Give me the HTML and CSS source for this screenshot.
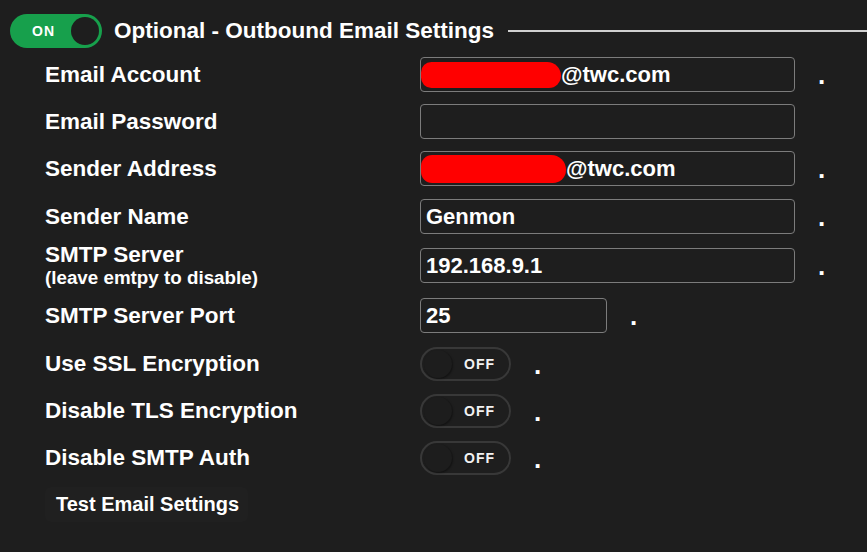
FILE: index.html
```html
<!DOCTYPE html>
<html lang="en">

<head>
    <meta charset="UTF-8">
    <title>Outbound Email Settings</title>
    <link rel="stylesheet" href="styles.css">
</head>

<body>
    <div class="section-head">
        <div class="switch on"><span class="switch-text">ON</span><span class="knob"></span></div>
        <h2>Optional - Outbound Email Settings</h2>
        <div class="rule"></div>
    </div>

    <div class="settings">
        <div class="row">
            <label>Email Account</label>
            <div class="field wide"><span class="redact"></span>@twc.com</div>
            <span class="dot">.</span>
        </div>
        <div class="row">
            <label>Email Password</label>
            <div class="field wide"></div>
        </div>
        <div class="row gap13">
            <label>Sender Address</label>
            <div class="field wide"><span class="redact r2"></span>@twc.com</div>
            <span class="dot">.</span>
        </div>
        <div class="row gap14">
            <label>Sender Name</label>
            <div class="field wide">Genmon</div>
            <span class="dot">.</span>
        </div>
        <div class="row gap15">
            <label>SMTP Server<small>(leave emtpy to disable)</small></label>
            <div class="field wide">192.168.9.1</div>
            <span class="dot">.</span>
        </div>
        <div class="row gap14">
            <label>SMTP Server Port</label>
            <div class="field short">25</div>
            <span class="dot">.</span>
        </div>
        <div class="row toggle-row">
            <label>Use SSL Encryption</label>
            <div class="switch off"><span class="knob"></span><span class="switch-text">OFF</span></div>
            <span class="dot">.</span>
        </div>
        <div class="row toggle-row">
            <label>Disable TLS Encryption</label>
            <div class="switch off"><span class="knob"></span><span class="switch-text">OFF</span></div>
            <span class="dot">.</span>
        </div>
        <div class="row toggle-row">
            <label>Disable SMTP Auth</label>
            <div class="switch off"><span class="knob"></span><span class="switch-text">OFF</span></div>
            <span class="dot">.</span>
        </div>
    </div>

    <button class="test-btn">Test Email Settings</button>
</body>

</html>
```

FILE: styles.css
```css
body {
    margin: 0;
    background-color: #1e1e1e;
    color: #fff;
    font-family: 'Liberation Sans', Arial, sans-serif;
    font-weight: bold;
}

.section-head {
    display: flex;
    align-items: center;
    padding: 14px 0 0 10px;
    height: 34px;
}

.section-head h2 {
    margin: 0 14px 0 12px;
    font-size: 22.5px;
    white-space: nowrap;
}

.rule {
    flex: 1;
    height: 2px;
    background-color: #d0d0d0;
}

.switch {
    box-sizing: border-box;
    display: flex;
    align-items: center;
    width: 92px;
    height: 34px;
    border-radius: 17px;
    flex-shrink: 0;
}

.switch-text {
    font-size: 14px;
    letter-spacing: 1px;
}

.switch.on {
    background-color: #17a04c;
    padding: 0 3px 0 22px;
    justify-content: space-between;
}

.switch.on .knob {
    width: 28px;
    height: 28px;
    border-radius: 50%;
    background-color: #1e1e1e;
}

.switch.off {
    border: 2px solid #383838;
    width: 91px;
    padding: 0 0 0 2px;
    background-color: #1e1e1e;
}

.switch.off .knob {
    width: 28px;
    height: 28px;
    border-radius: 50%;
    background-color: #1d1d1d;
    box-shadow: 1px 1px 2px rgba(0, 0, 0, 0.4);
    margin-right: 10px;
}

.switch.off .switch-text {
    margin-left: 2px;
    color: #f2f2f2;
}

.settings {
    padding: 9px 0 0 45px;
}

.row {
    display: flex;
    align-items: center;
    height: 35px;
    margin-bottom: 12px;
}

.row.gap13 {
    margin-bottom: 13px;
}

.row.gap14 {
    margin-bottom: 14px;
}

.row.gap15 {
    margin-bottom: 15px;
}

.row.toggle-row {
    height: 34px;
    margin-bottom: 13px;
}

.row label {
    width: 375px;
    font-size: 22.5px;
    display: flex;
    flex-direction: column;
    line-height: 24px;
}

.row label small {
    font-size: 18.8px;
    line-height: 22px;
}

.field {
    box-sizing: border-box;
    height: 35px;
    border: 1px solid #7c7c7c;
    border-radius: 4px;
    font-size: 22px;
    display: flex;
    align-items: center;
    padding-left: 5px;
}

.field.wide {
    width: 375px;
}

.field.short {
    width: 187px;
}

.redact {
    width: 140px;
    height: 26px;
    margin-left: -5px;
    background-color: #ff0000;
    border-radius: 12px 16px 14px 12px;
}

.redact.r2 {
    width: 145px;
    height: 28px;
}

.dot {
    font-size: 26px;
    margin-left: 23px;
    padding-top: 2px;
}

.test-btn {
    display: block;
    margin: -1px 0 0 45px;
    width: 203px;
    height: 35px;
    background-color: #202020;
    border: none;
    border-radius: 6px;
    color: #fff;
    font-family: 'Liberation Sans', Arial, sans-serif;
    font-weight: bold;
    font-size: 20px;
    text-align: left;
    padding: 0 0 0 11px;
}
```
